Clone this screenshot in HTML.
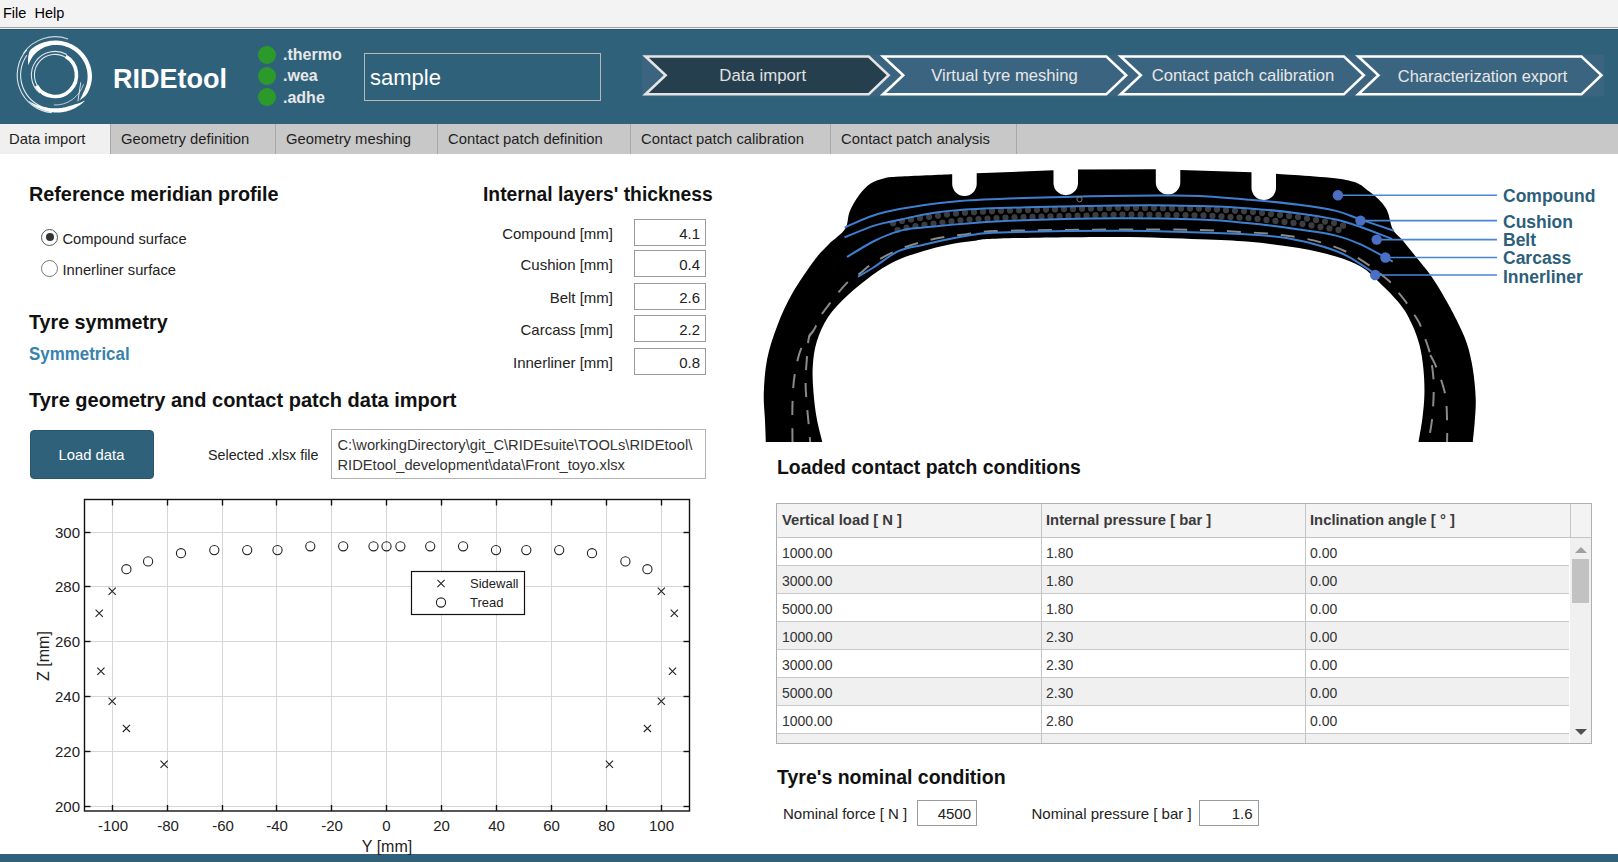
<!DOCTYPE html>
<html><head><meta charset="utf-8"><style>
html,body{margin:0;padding:0;width:1618px;height:862px;overflow:hidden;background:#fff;position:relative;font-family:"Liberation Sans",sans-serif}
.t{position:absolute;white-space:nowrap;font-family:"Liberation Sans", sans-serif}
</style></head><body>
<div style="position:absolute;left:0px;top:0px;width:1618px;height:27px;background:#f3f3f3"></div>
<div style="position:absolute;left:0px;top:27px;width:1618px;height:1px;background:#a0a0a0"></div>
<div style="position:absolute;left:0px;top:28px;width:1618px;height:1px;background:#f0f0f0"></div>
<div class="t" style="left:3.0px;top:5.7px;font-size:14.5px;line-height:14.5px;font-weight:normal;color:#000;">File</div>
<div class="t" style="left:34.5px;top:5.7px;font-size:14.5px;line-height:14.5px;font-weight:normal;color:#000;">Help</div>
<div style="position:absolute;left:0px;top:29px;width:1618px;height:95px;background:#2f617a"></div>
<div style="position:absolute;left:0px;top:29px;width:1618px;height:1px;background:#28546b"></div>
<svg style="position:absolute;left:0;top:0" width="130" height="125"><path d="M28.38,65.28 L28.12,63.14 L28.01,60.94 L28.07,58.67 L28.30,56.36 L28.71,54.01 L29.31,51.64 L30.57,49.76 L32.29,48.35 L34.08,47.04 L35.95,45.84 L37.88,44.76 L39.87,43.79 L41.90,42.95 L43.98,42.24 L46.10,41.65 L48.24,41.19 L50.41,40.85 L52.58,40.65 L54.76,40.58 L56.94,40.62 L59.11,40.77 L61.26,41.04 L63.39,41.44 L65.50,41.97 L67.57,42.62 L69.59,43.39 L71.56,44.28 L73.48,45.29 L75.33,46.40 L77.12,47.62 L78.83,48.94 L80.46,50.37 L81.99,51.88 L83.44,53.49 L84.79,55.17 L86.03,56.94 L87.16,58.77 L88.19,60.67 L89.09,62.63 L89.88,64.63 L90.55,66.68 L91.09,68.77 L91.51,70.88 L91.80,73.01 L91.96,75.16 L91.99,77.31 L91.82,79.45 L91.52,81.58 L91.10,83.67 L90.56,85.74 L89.89,87.76 L89.11,89.73 L88.19,91.64 L87.17,93.49 L85.91,95.19 L84.36,96.66 L82.74,98.01 L81.06,99.23 L79.33,100.33 L79.33,100.33 L80.41,98.66 L81.38,96.93 L82.22,95.18 L82.95,93.39 L83.76,91.68 L84.58,90.00 L85.31,88.27 L85.95,86.51 L86.50,84.71 L86.94,82.88 L87.27,81.03 L87.49,79.16 L87.59,77.27 L87.58,75.38 L87.45,73.50 L87.21,71.62 L86.85,69.76 L86.38,67.93 L85.81,66.12 L85.13,64.35 L84.34,62.62 L83.45,60.94 L82.46,59.32 L81.38,57.76 L80.20,56.26 L78.94,54.84 L77.59,53.49 L76.16,52.23 L74.66,51.05 L73.09,49.96 L71.45,48.97 L69.75,48.09 L68.01,47.31 L66.22,46.63 L64.39,46.07 L62.53,45.61 L60.64,45.27 L58.74,45.03 L56.83,44.92 L54.91,44.93 L53.00,45.07 L51.10,45.32 L49.22,45.69 L47.36,46.16 L45.54,46.75 L43.79,47.51 L42.10,48.39 L40.47,49.36 L38.90,50.43 L37.41,51.59 L36.00,52.83 L34.67,54.15 L33.44,55.56 L32.34,57.07 L31.35,58.63 L30.45,60.23 L29.66,61.88 L28.97,63.57 L28.38,65.28 Z" fill="#fff"/><path d="M84.73,101.10 L83.93,101.85 L83.12,102.58 L82.29,103.27 L81.44,103.94 L80.58,104.59 L79.69,105.20 L78.80,105.79 L77.89,106.35 L76.96,106.88 L76.06,107.43 L75.14,107.95 L74.21,108.45 L73.26,108.91 L72.30,109.35 L71.33,109.76 L70.36,110.14 L69.37,110.49 L68.37,110.81 L67.38,111.11 L66.37,111.39 L65.36,111.64 L64.34,111.85 L63.32,112.04 L62.29,112.20 L61.26,112.32 L60.23,112.42 L59.20,112.48 L58.17,112.52 L57.14,112.53 L56.11,112.50 L55.08,112.49 L54.05,112.45 L53.02,112.37 L52.00,112.27 L50.98,112.14 L49.96,111.98 L48.95,111.79 L47.94,111.57 L46.94,111.33 L45.95,111.05 L44.97,110.74 L44.00,110.41 L43.02,110.09 L42.04,109.75 L41.07,109.38 L40.12,108.99 L39.17,108.56 L38.23,108.11 L37.31,107.63 L36.40,107.12 L35.51,106.59 L34.62,106.03 L33.75,105.45 L32.89,104.84 L32.05,104.21 L31.23,103.55 L30.43,102.86 L29.64,102.16 L28.88,101.42 L29.25,101.09 L30.14,101.68 L31.05,102.24 L31.96,102.76 L32.89,103.26 L33.82,103.72 L34.76,104.15 L35.71,104.55 L36.66,104.92 L37.60,105.28 L38.54,105.61 L39.49,105.91 L40.44,106.19 L41.39,106.43 L42.34,106.64 L43.29,106.82 L44.24,106.97 L45.18,107.11 L46.08,107.34 L46.98,107.56 L47.89,107.74 L48.80,107.90 L49.71,108.03 L50.62,108.13 L51.54,108.21 L52.45,108.26 L53.37,108.28 L54.28,108.28 L55.19,108.25 L56.09,108.20 L57.00,108.22 L57.90,108.21 L58.81,108.18 L59.72,108.11 L60.62,108.03 L61.53,107.91 L62.43,107.77 L63.32,107.61 L64.22,107.41 L65.10,107.19 L65.99,106.95 L66.86,106.69 L67.79,106.52 L68.71,106.33 L69.63,106.11 L70.54,105.86 L71.46,105.58 L72.37,105.28 L73.28,104.94 L74.18,104.58 L75.07,104.19 L76.11,103.96 L77.14,103.70 L78.18,103.40 L79.21,103.06 L80.25,102.68 L81.28,102.26 L82.31,101.81 L83.33,101.32 L84.34,100.78 Z" fill="#fff"/><g fill="none" stroke="#fff"><path d="M65.75,56.38 A21.5,21.5 0 1 1 36.38,85.75" stroke-width="3.6"/><path d="M39.22,88.24 A20.6,20.6 0 0 1 66.82,58.13" stroke-width="1.1" opacity="0.85"/><path d="M39.83,93.08 A23.6,23.6 0 0 1 66.80,54.56" stroke-width="1.1" opacity="0.85"/><path d="M51.71,112.66 A37.8,37.8 0 0 1 26.91,49.71" stroke-width="1.1" opacity="0.85"/><path d="M46.10,108.23 A34.4,34.4 0 0 1 26.82,55.27" stroke-width="1.1" opacity="0.85"/><path d="M23.63,53.03 A38.3,38.3 0 0 1 68.10,39.01" stroke-width="1.1" opacity="0.75"/><path d="M83.53,84.27 A30.0,30.0 0 0 1 53.95,104.98" stroke-width="0.9" opacity="0.75"/><path d="M77.9,101.3 L80.8,82.3" stroke-width="1" opacity="0.8"/></g></svg>
<div class="t" style="left:113.2px;top:64.3px;font-size:28.3px;line-height:28.3px;font-weight:bold;color:#fff;transform:scaleX(0.955);transform-origin:0 0">RIDEtool</div>
<div style="position:absolute;left:257.5px;top:45.7px;width:18.0px;height:18.0px;background:#2b9a2b;border-radius:50%"></div>
<div style="position:absolute;left:257.5px;top:66.8px;width:18.0px;height:18.0px;background:#2b9a2b;border-radius:50%"></div>
<div style="position:absolute;left:257.5px;top:88.4px;width:18.0px;height:18.0px;background:#2b9a2b;border-radius:50%"></div>
<div class="t" style="left:283.0px;top:46.5px;font-size:16px;line-height:16px;font-weight:bold;color:#e8e8e8;">.thermo</div>
<div class="t" style="left:283.0px;top:68.0px;font-size:16px;line-height:16px;font-weight:bold;color:#e8e8e8;">.wea</div>
<div class="t" style="left:283.0px;top:89.5px;font-size:16px;line-height:16px;font-weight:bold;color:#e8e8e8;">.adhe</div>
<div style="position:absolute;left:364px;top:53px;width:237px;height:48px;border:1px solid #b8b8b8;box-sizing:border-box"></div>
<div class="t" style="left:370.0px;top:66.9px;font-size:22px;line-height:22px;font-weight:normal;color:#fff;">sample</div>
<svg style="position:absolute;left:0;top:0" width="1618" height="125"><defs><clipPath id="cc"><rect x="641.8" y="54" width="962.2" height="43"/></clipPath></defs><g clip-path="url(#cc)"><rect x="641.5" y="54.5" width="963" height="42" fill="#3b6480"/><polygon points="642.20,55.20 869.20,55.20 890.50,75.35 869.20,95.50 642.20,95.50 663.70,75.35" fill="#e4e4e4"/><polygon points="648.78,57.80 868.17,57.80 886.72,75.35 868.17,92.90 648.78,92.90 667.50,75.35" fill="#263f4e"/><polygon points="879.80,55.20 1106.80,55.20 1128.10,75.35 1106.80,95.50 879.80,95.50 901.30,75.35" fill="#ffffff"/><polygon points="886.38,57.80 1105.77,57.80 1124.32,75.35 1105.77,92.90 886.38,92.90 905.10,75.35" fill="#3b6480"/><polygon points="1117.40,55.20 1344.40,55.20 1365.70,75.35 1344.40,95.50 1117.40,95.50 1138.90,75.35" fill="#ffffff"/><polygon points="1123.98,57.80 1343.37,57.80 1361.92,75.35 1343.37,92.90 1123.98,92.90 1142.70,75.35" fill="#3b6480"/><polygon points="1355.00,55.20 1582.00,55.20 1603.30,75.35 1582.00,95.50 1355.00,95.50 1376.50,75.35" fill="#ffffff"/><polygon points="1361.58,57.80 1580.97,57.80 1599.52,75.35 1580.97,92.90 1361.58,92.90 1380.30,75.35" fill="#3b6480"/></g></svg>
<div class="t" style="left:362.7px;width:800px;text-align:center;top:67.8px;font-size:16.8px;line-height:16.8px;font-weight:normal;color:#e2e2e2;">Data import</div>
<div class="t" style="left:604.5px;width:800px;text-align:center;top:67.9px;font-size:16.6px;line-height:16.6px;font-weight:normal;color:#e8e8e8;">Virtual tyre meshing</div>
<div class="t" style="left:843.0px;width:800px;text-align:center;top:67.9px;font-size:16.6px;line-height:16.6px;font-weight:normal;color:#e8e8e8;">Contact patch calibration</div>
<div class="t" style="left:1082.6px;width:800px;text-align:center;top:68.1px;font-size:16.4px;line-height:16.4px;font-weight:normal;color:#e8e8e8;">Characterization export</div>
<div style="position:absolute;left:0px;top:124px;width:1618px;height:30px;background:#c8c8c8"></div>
<div style="position:absolute;left:0px;top:124px;width:110px;height:30px;background:#f0f0f0"></div>
<div class="t" style="left:9.0px;top:132.0px;font-size:14.8px;line-height:14.8px;font-weight:normal;color:#1e1e1e;">Data import</div>
<div class="t" style="left:121.0px;top:132.0px;font-size:14.8px;line-height:14.8px;font-weight:normal;color:#1e1e1e;">Geometry definition</div>
<div style="position:absolute;left:110px;top:124px;width:1px;height:30px;background:#a8a8a8"></div>
<div class="t" style="left:286.0px;top:132.0px;font-size:14.8px;line-height:14.8px;font-weight:normal;color:#1e1e1e;">Geometry meshing</div>
<div style="position:absolute;left:275px;top:124px;width:1px;height:30px;background:#a8a8a8"></div>
<div class="t" style="left:448.0px;top:132.0px;font-size:14.8px;line-height:14.8px;font-weight:normal;color:#1e1e1e;">Contact patch definition</div>
<div style="position:absolute;left:437px;top:124px;width:1px;height:30px;background:#a8a8a8"></div>
<div class="t" style="left:641.0px;top:132.0px;font-size:14.8px;line-height:14.8px;font-weight:normal;color:#1e1e1e;">Contact patch calibration</div>
<div style="position:absolute;left:630px;top:124px;width:1px;height:30px;background:#a8a8a8"></div>
<div class="t" style="left:841.0px;top:132.0px;font-size:14.8px;line-height:14.8px;font-weight:normal;color:#1e1e1e;">Contact patch analysis</div>
<div style="position:absolute;left:830px;top:124px;width:1px;height:30px;background:#a8a8a8"></div>
<div style="position:absolute;left:1016px;top:124px;width:1px;height:30px;background:#a8a8a8"></div>
<div style="position:absolute;left:0px;top:154px;width:1618px;height:700px;background:#fff"></div>
<div style="position:absolute;left:0px;top:854px;width:1618px;height:8px;background:#2f617a"></div>
<div class="t" style="left:29.0px;top:185.0px;font-size:19.8px;line-height:19.8px;font-weight:bold;color:#111;">Reference meridian profile</div>
<div style="position:absolute;left:41px;top:228.5px;width:15px;height:15px;border:1px solid #555;border-radius:50%;background:#fff"></div>
<div style="position:absolute;left:45.5px;top:233px;width:8px;height:8px;border-radius:50%;background:#333"></div>
<div style="position:absolute;left:41px;top:259.5px;width:15px;height:15px;border:1px solid #777;border-radius:50%;background:#fff"></div>
<div class="t" style="left:62.5px;top:231.6px;font-size:14.7px;line-height:14.7px;font-weight:normal;color:#222;">Compound surface</div>
<div class="t" style="left:62.5px;top:262.6px;font-size:14.7px;line-height:14.7px;font-weight:normal;color:#222;">Innerliner surface</div>
<div class="t" style="left:29.0px;top:312.6px;font-size:19.7px;line-height:19.7px;font-weight:bold;color:#111;">Tyre symmetry</div>
<div class="t" style="left:28.6px;top:345.4px;font-size:18.2px;line-height:18.2px;font-weight:bold;color:#3882ac;transform:scaleX(0.93);transform-origin:0 0">Symmetrical</div>
<div class="t" style="left:29.0px;top:389.7px;font-size:20px;line-height:20px;font-weight:bold;color:#111;">Tyre geometry and contact patch data import</div>
<div class="t" style="left:483.0px;top:184.7px;font-size:19.3px;line-height:19.3px;font-weight:bold;color:#111;">Internal layers' thickness</div>
<div class="t" style="left:13.0px;width:600px;text-align:right;top:226.0px;font-size:15px;line-height:15px;font-weight:normal;color:#222;">Compound [mm]</div>
<div style="position:absolute;left:634px;top:219px;width:72px;height:27px;border:1px solid #9a9a9a;box-sizing:border-box;background:#fff"></div>
<div class="t" style="left:100.0px;width:600px;text-align:right;top:226.0px;font-size:15px;line-height:15px;font-weight:normal;color:#222;">4.1</div>
<div class="t" style="left:13.0px;width:600px;text-align:right;top:257.0px;font-size:15px;line-height:15px;font-weight:normal;color:#222;">Cushion [mm]</div>
<div style="position:absolute;left:634px;top:250px;width:72px;height:27px;border:1px solid #9a9a9a;box-sizing:border-box;background:#fff"></div>
<div class="t" style="left:100.0px;width:600px;text-align:right;top:257.0px;font-size:15px;line-height:15px;font-weight:normal;color:#222;">0.4</div>
<div class="t" style="left:13.0px;width:600px;text-align:right;top:290.0px;font-size:15px;line-height:15px;font-weight:normal;color:#222;">Belt [mm]</div>
<div style="position:absolute;left:634px;top:283px;width:72px;height:27px;border:1px solid #9a9a9a;box-sizing:border-box;background:#fff"></div>
<div class="t" style="left:100.0px;width:600px;text-align:right;top:290.0px;font-size:15px;line-height:15px;font-weight:normal;color:#222;">2.6</div>
<div class="t" style="left:13.0px;width:600px;text-align:right;top:322.0px;font-size:15px;line-height:15px;font-weight:normal;color:#222;">Carcass [mm]</div>
<div style="position:absolute;left:634px;top:315px;width:72px;height:27px;border:1px solid #9a9a9a;box-sizing:border-box;background:#fff"></div>
<div class="t" style="left:100.0px;width:600px;text-align:right;top:322.0px;font-size:15px;line-height:15px;font-weight:normal;color:#222;">2.2</div>
<div class="t" style="left:13.0px;width:600px;text-align:right;top:355.0px;font-size:15px;line-height:15px;font-weight:normal;color:#222;">Innerliner [mm]</div>
<div style="position:absolute;left:634px;top:348px;width:72px;height:27px;border:1px solid #9a9a9a;box-sizing:border-box;background:#fff"></div>
<div class="t" style="left:100.0px;width:600px;text-align:right;top:355.0px;font-size:15px;line-height:15px;font-weight:normal;color:#222;">0.8</div>
<div style="position:absolute;left:29.5px;top:429.5px;width:124.0px;height:49.0px;background:#2f617a;border:1px solid #2a566d;border-radius:4px;box-sizing:border-box"></div>
<div class="t" style="left:-308.5px;width:800px;text-align:center;top:448.0px;font-size:14.8px;line-height:14.8px;font-weight:normal;color:#fff;">Load data</div>
<div class="t" style="left:208.0px;top:447.9px;font-size:14.3px;line-height:14.3px;font-weight:normal;color:#222;">Selected .xlsx file</div>
<div style="position:absolute;left:331px;top:429px;width:375px;height:49.5px;border:1px solid #b4b4b4;box-sizing:border-box;background:#fff"></div>
<div class="t" style="left:337.5px;top:438.1px;font-size:14.7px;line-height:14.7px;font-weight:normal;color:#333;">C:\workingDirectory\git_C\RIDEsuite\TOOLs\RIDEtool\</div>
<div class="t" style="left:337.5px;top:458.1px;font-size:14.7px;line-height:14.7px;font-weight:normal;color:#333;">RIDEtool_development\data\Front_toyo.xlsx</div>
<svg style="position:absolute;left:0;top:0" width="1618" height="862"><line x1="112.5" y1="499.5" x2="112.5" y2="811" stroke="#d6d6d6" stroke-width="1"/><line x1="167.5" y1="499.5" x2="167.5" y2="811" stroke="#d6d6d6" stroke-width="1"/><line x1="222.5" y1="499.5" x2="222.5" y2="811" stroke="#d6d6d6" stroke-width="1"/><line x1="276.5" y1="499.5" x2="276.5" y2="811" stroke="#d6d6d6" stroke-width="1"/><line x1="331.5" y1="499.5" x2="331.5" y2="811" stroke="#d6d6d6" stroke-width="1"/><line x1="386.5" y1="499.5" x2="386.5" y2="811" stroke="#d6d6d6" stroke-width="1"/><line x1="441.5" y1="499.5" x2="441.5" y2="811" stroke="#d6d6d6" stroke-width="1"/><line x1="496.5" y1="499.5" x2="496.5" y2="811" stroke="#d6d6d6" stroke-width="1"/><line x1="551.5" y1="499.5" x2="551.5" y2="811" stroke="#d6d6d6" stroke-width="1"/><line x1="606.5" y1="499.5" x2="606.5" y2="811" stroke="#d6d6d6" stroke-width="1"/><line x1="661.5" y1="499.5" x2="661.5" y2="811" stroke="#d6d6d6" stroke-width="1"/><line x1="84.5" y1="806.5" x2="689.5" y2="806.5" stroke="#d6d6d6" stroke-width="1"/><line x1="84.5" y1="751.5" x2="689.5" y2="751.5" stroke="#d6d6d6" stroke-width="1"/><line x1="84.5" y1="696.5" x2="689.5" y2="696.5" stroke="#d6d6d6" stroke-width="1"/><line x1="84.5" y1="641.5" x2="689.5" y2="641.5" stroke="#d6d6d6" stroke-width="1"/><line x1="84.5" y1="586.5" x2="689.5" y2="586.5" stroke="#d6d6d6" stroke-width="1"/><line x1="84.5" y1="532.5" x2="689.5" y2="532.5" stroke="#d6d6d6" stroke-width="1"/><rect x="84.5" y="499.5" width="605.0" height="311.5" fill="none" stroke="#111" stroke-width="1.4"/><line x1="112.5" y1="499.5" x2="112.5" y2="505.5" stroke="#111" stroke-width="1.4"/><line x1="112.5" y1="811" x2="112.5" y2="805" stroke="#111" stroke-width="1.4"/><line x1="167.5" y1="499.5" x2="167.5" y2="505.5" stroke="#111" stroke-width="1.4"/><line x1="167.5" y1="811" x2="167.5" y2="805" stroke="#111" stroke-width="1.4"/><line x1="222.5" y1="499.5" x2="222.5" y2="505.5" stroke="#111" stroke-width="1.4"/><line x1="222.5" y1="811" x2="222.5" y2="805" stroke="#111" stroke-width="1.4"/><line x1="276.5" y1="499.5" x2="276.5" y2="505.5" stroke="#111" stroke-width="1.4"/><line x1="276.5" y1="811" x2="276.5" y2="805" stroke="#111" stroke-width="1.4"/><line x1="331.5" y1="499.5" x2="331.5" y2="505.5" stroke="#111" stroke-width="1.4"/><line x1="331.5" y1="811" x2="331.5" y2="805" stroke="#111" stroke-width="1.4"/><line x1="386.5" y1="499.5" x2="386.5" y2="505.5" stroke="#111" stroke-width="1.4"/><line x1="386.5" y1="811" x2="386.5" y2="805" stroke="#111" stroke-width="1.4"/><line x1="441.5" y1="499.5" x2="441.5" y2="505.5" stroke="#111" stroke-width="1.4"/><line x1="441.5" y1="811" x2="441.5" y2="805" stroke="#111" stroke-width="1.4"/><line x1="496.5" y1="499.5" x2="496.5" y2="505.5" stroke="#111" stroke-width="1.4"/><line x1="496.5" y1="811" x2="496.5" y2="805" stroke="#111" stroke-width="1.4"/><line x1="551.5" y1="499.5" x2="551.5" y2="505.5" stroke="#111" stroke-width="1.4"/><line x1="551.5" y1="811" x2="551.5" y2="805" stroke="#111" stroke-width="1.4"/><line x1="606.5" y1="499.5" x2="606.5" y2="505.5" stroke="#111" stroke-width="1.4"/><line x1="606.5" y1="811" x2="606.5" y2="805" stroke="#111" stroke-width="1.4"/><line x1="661.5" y1="499.5" x2="661.5" y2="505.5" stroke="#111" stroke-width="1.4"/><line x1="661.5" y1="811" x2="661.5" y2="805" stroke="#111" stroke-width="1.4"/><line x1="84.5" y1="806.5" x2="90.5" y2="806.5" stroke="#111" stroke-width="1.4"/><line x1="689.5" y1="806.5" x2="683.5" y2="806.5" stroke="#111" stroke-width="1.4"/><line x1="84.5" y1="751.5" x2="90.5" y2="751.5" stroke="#111" stroke-width="1.4"/><line x1="689.5" y1="751.5" x2="683.5" y2="751.5" stroke="#111" stroke-width="1.4"/><line x1="84.5" y1="696.5" x2="90.5" y2="696.5" stroke="#111" stroke-width="1.4"/><line x1="689.5" y1="696.5" x2="683.5" y2="696.5" stroke="#111" stroke-width="1.4"/><line x1="84.5" y1="641.5" x2="90.5" y2="641.5" stroke="#111" stroke-width="1.4"/><line x1="689.5" y1="641.5" x2="683.5" y2="641.5" stroke="#111" stroke-width="1.4"/><line x1="84.5" y1="586.5" x2="90.5" y2="586.5" stroke="#111" stroke-width="1.4"/><line x1="689.5" y1="586.5" x2="683.5" y2="586.5" stroke="#111" stroke-width="1.4"/><line x1="84.5" y1="532.5" x2="90.5" y2="532.5" stroke="#111" stroke-width="1.4"/><line x1="689.5" y1="532.5" x2="683.5" y2="532.5" stroke="#111" stroke-width="1.4"/><circle cx="126.4" cy="569.2" r="4.6" fill="none" stroke="#222" stroke-width="1.1"/><circle cx="148.1" cy="561.4" r="4.6" fill="none" stroke="#222" stroke-width="1.1"/><circle cx="181" cy="553.2" r="4.6" fill="none" stroke="#222" stroke-width="1.1"/><circle cx="214.3" cy="550.1" r="4.6" fill="none" stroke="#222" stroke-width="1.1"/><circle cx="247.2" cy="550.1" r="4.6" fill="none" stroke="#222" stroke-width="1.1"/><circle cx="277.5" cy="550.1" r="4.6" fill="none" stroke="#222" stroke-width="1.1"/><circle cx="310.3" cy="546.3" r="4.6" fill="none" stroke="#222" stroke-width="1.1"/><circle cx="343.2" cy="546.3" r="4.6" fill="none" stroke="#222" stroke-width="1.1"/><circle cx="373.5" cy="546.3" r="4.6" fill="none" stroke="#222" stroke-width="1.1"/><circle cx="386.5" cy="546.3" r="4.6" fill="none" stroke="#222" stroke-width="1.1"/><circle cx="400.4" cy="546.3" r="4.6" fill="none" stroke="#222" stroke-width="1.1"/><circle cx="430.2" cy="546.3" r="4.6" fill="none" stroke="#222" stroke-width="1.1"/><circle cx="463.1" cy="546.3" r="4.6" fill="none" stroke="#222" stroke-width="1.1"/><circle cx="496" cy="550.1" r="4.6" fill="none" stroke="#222" stroke-width="1.1"/><circle cx="526.3" cy="550.1" r="4.6" fill="none" stroke="#222" stroke-width="1.1"/><circle cx="559.2" cy="550.1" r="4.6" fill="none" stroke="#222" stroke-width="1.1"/><circle cx="592" cy="553.2" r="4.6" fill="none" stroke="#222" stroke-width="1.1"/><circle cx="625.4" cy="561.4" r="4.6" fill="none" stroke="#222" stroke-width="1.1"/><circle cx="647.4" cy="569.2" r="4.6" fill="none" stroke="#222" stroke-width="1.1"/><path d="M108.60000000000001,587.6999999999999 L115.8,594.9 M108.60000000000001,594.9 L115.8,587.6999999999999" stroke="#222" stroke-width="1.1"/><path d="M95.60000000000001,609.6999999999999 L102.8,616.9 M95.60000000000001,616.9 L102.8,609.6999999999999" stroke="#222" stroke-width="1.1"/><path d="M97.30000000000001,667.6999999999999 L104.5,674.9 M97.30000000000001,674.9 L104.5,667.6999999999999" stroke="#222" stroke-width="1.1"/><path d="M108.60000000000001,697.6 L115.8,704.8000000000001 M108.60000000000001,704.8000000000001 L115.8,697.6" stroke="#222" stroke-width="1.1"/><path d="M122.80000000000001,724.8 L130.0,732.0 M122.80000000000001,732.0 L130.0,724.8" stroke="#222" stroke-width="1.1"/><path d="M160.5,760.6999999999999 L167.7,767.9 M160.5,767.9 L167.7,760.6999999999999" stroke="#222" stroke-width="1.1"/><path d="M657.6999999999999,587.6999999999999 L664.9,594.9 M657.6999999999999,594.9 L664.9,587.6999999999999" stroke="#222" stroke-width="1.1"/><path d="M670.6999999999999,609.6999999999999 L677.9,616.9 M670.6999999999999,616.9 L677.9,609.6999999999999" stroke="#222" stroke-width="1.1"/><path d="M668.9,667.6999999999999 L676.1,674.9 M668.9,674.9 L676.1,667.6999999999999" stroke="#222" stroke-width="1.1"/><path d="M657.6999999999999,697.6 L664.9,704.8000000000001 M657.6999999999999,704.8000000000001 L664.9,697.6" stroke="#222" stroke-width="1.1"/><path d="M643.8,724.8 L651.0,732.0 M643.8,732.0 L651.0,724.8" stroke="#222" stroke-width="1.1"/><path d="M605.8,760.6999999999999 L613.0,767.9 M605.8,767.9 L613.0,760.6999999999999" stroke="#222" stroke-width="1.1"/><rect x="411.5" y="571.5" width="113" height="43" fill="#fff" stroke="#111" stroke-width="1.2"/><path d="M437.4,579.9 L444.6,587.1 M437.4,587.1 L444.6,579.9" stroke="#222" stroke-width="1.1"/><circle cx="441" cy="602.5" r="4.6" fill="none" stroke="#222" stroke-width="1.1"/></svg>
<div class="t" style="left:470.0px;top:576.5px;font-size:13px;line-height:13px;font-weight:normal;color:#222;">Sidewall</div>
<div class="t" style="left:470.0px;top:596.2px;font-size:13px;line-height:13px;font-weight:normal;color:#222;">Tread</div>
<div class="t" style="left:-287.0px;width:800px;text-align:center;top:818.3px;font-size:15px;line-height:15px;font-weight:normal;color:#222;">-100</div>
<div class="t" style="left:-232.0px;width:800px;text-align:center;top:818.3px;font-size:15px;line-height:15px;font-weight:normal;color:#222;">-80</div>
<div class="t" style="left:-177.0px;width:800px;text-align:center;top:818.3px;font-size:15px;line-height:15px;font-weight:normal;color:#222;">-60</div>
<div class="t" style="left:-123.0px;width:800px;text-align:center;top:818.3px;font-size:15px;line-height:15px;font-weight:normal;color:#222;">-40</div>
<div class="t" style="left:-68.0px;width:800px;text-align:center;top:818.3px;font-size:15px;line-height:15px;font-weight:normal;color:#222;">-20</div>
<div class="t" style="left:-13.5px;width:800px;text-align:center;top:818.3px;font-size:15px;line-height:15px;font-weight:normal;color:#222;">0</div>
<div class="t" style="left:41.5px;width:800px;text-align:center;top:818.3px;font-size:15px;line-height:15px;font-weight:normal;color:#222;">20</div>
<div class="t" style="left:96.5px;width:800px;text-align:center;top:818.3px;font-size:15px;line-height:15px;font-weight:normal;color:#222;">40</div>
<div class="t" style="left:151.5px;width:800px;text-align:center;top:818.3px;font-size:15px;line-height:15px;font-weight:normal;color:#222;">60</div>
<div class="t" style="left:206.5px;width:800px;text-align:center;top:818.3px;font-size:15px;line-height:15px;font-weight:normal;color:#222;">80</div>
<div class="t" style="left:261.5px;width:800px;text-align:center;top:818.3px;font-size:15px;line-height:15px;font-weight:normal;color:#222;">100</div>
<div class="t" style="left:-520.0px;width:600px;text-align:right;top:799.4px;font-size:15px;line-height:15px;font-weight:normal;color:#222;">200</div>
<div class="t" style="left:-520.0px;width:600px;text-align:right;top:744.4px;font-size:15px;line-height:15px;font-weight:normal;color:#222;">220</div>
<div class="t" style="left:-520.0px;width:600px;text-align:right;top:689.4px;font-size:15px;line-height:15px;font-weight:normal;color:#222;">240</div>
<div class="t" style="left:-520.0px;width:600px;text-align:right;top:634.4px;font-size:15px;line-height:15px;font-weight:normal;color:#222;">260</div>
<div class="t" style="left:-520.0px;width:600px;text-align:right;top:579.4px;font-size:15px;line-height:15px;font-weight:normal;color:#222;">280</div>
<div class="t" style="left:-520.0px;width:600px;text-align:right;top:525.4px;font-size:15px;line-height:15px;font-weight:normal;color:#222;">300</div>
<div class="t" style="left:-13.0px;width:800px;text-align:center;top:838.5px;font-size:16px;line-height:16px;font-weight:normal;color:#222;">Y [mm]</div>
<div class="t" style="left:13.5px;top:648px;width:60px;text-align:center;font-size:16px;line-height:16px;color:#222;transform:rotate(-90deg)">Z [mm]</div>
<div class="t" style="left:777.0px;top:457.9px;font-size:19.4px;line-height:19.4px;font-weight:bold;color:#111;">Loaded contact patch conditions</div>
<div style="position:absolute;left:776px;top:503px;width:816px;height:241px;border:1px solid #b0b0b0;box-sizing:border-box;background:#fff"></div>
<div style="position:absolute;left:777px;top:504px;width:814px;height:33px;background:#f3f3f3"></div>
<div style="position:absolute;left:777px;top:537px;width:814px;height:1px;background:#c4c4c4"></div>
<div style="position:absolute;left:777px;top:565px;width:792px;height:1px;background:#c8c8c8"></div>
<div style="position:absolute;left:777px;top:566px;width:792px;height:27px;background:#f0f0f0"></div>
<div style="position:absolute;left:777px;top:593px;width:792px;height:1px;background:#c8c8c8"></div>
<div style="position:absolute;left:777px;top:621px;width:792px;height:1px;background:#c8c8c8"></div>
<div style="position:absolute;left:777px;top:622px;width:792px;height:27px;background:#f0f0f0"></div>
<div style="position:absolute;left:777px;top:649px;width:792px;height:1px;background:#c8c8c8"></div>
<div style="position:absolute;left:777px;top:677px;width:792px;height:1px;background:#c8c8c8"></div>
<div style="position:absolute;left:777px;top:678px;width:792px;height:27px;background:#f0f0f0"></div>
<div style="position:absolute;left:777px;top:705px;width:792px;height:1px;background:#c8c8c8"></div>
<div style="position:absolute;left:777px;top:733px;width:792px;height:1px;background:#c8c8c8"></div>
<div style="position:absolute;left:777px;top:734px;width:792px;height:9px;background:#f0f0f0"></div>
<div style="position:absolute;left:1041px;top:504px;width:1px;height:239px;background:#c4c4c4"></div>
<div style="position:absolute;left:1305px;top:504px;width:1px;height:239px;background:#c4c4c4"></div>
<div style="position:absolute;left:1569.5px;top:504px;width:1.0px;height:33px;background:#c4c4c4"></div>
<div class="t" style="left:782.0px;top:512.5px;font-size:14.8px;line-height:14.8px;font-weight:bold;color:#3a3a3a;">Vertical load [ N ]</div>
<div class="t" style="left:1046.0px;top:512.5px;font-size:14.8px;line-height:14.8px;font-weight:bold;color:#3a3a3a;">Internal pressure [ bar ]</div>
<div class="t" style="left:1310.0px;top:512.5px;font-size:14.8px;line-height:14.8px;font-weight:bold;color:#3a3a3a;">Inclination angle [ ° ]</div>
<div class="t" style="left:782.0px;top:545.6px;font-size:14px;line-height:14px;font-weight:normal;color:#333;">1000.00</div>
<div class="t" style="left:1046.0px;top:545.6px;font-size:14px;line-height:14px;font-weight:normal;color:#333;">1.80</div>
<div class="t" style="left:1310.0px;top:545.6px;font-size:14px;line-height:14px;font-weight:normal;color:#333;">0.00</div>
<div class="t" style="left:782.0px;top:573.6px;font-size:14px;line-height:14px;font-weight:normal;color:#333;">3000.00</div>
<div class="t" style="left:1046.0px;top:573.6px;font-size:14px;line-height:14px;font-weight:normal;color:#333;">1.80</div>
<div class="t" style="left:1310.0px;top:573.6px;font-size:14px;line-height:14px;font-weight:normal;color:#333;">0.00</div>
<div class="t" style="left:782.0px;top:601.6px;font-size:14px;line-height:14px;font-weight:normal;color:#333;">5000.00</div>
<div class="t" style="left:1046.0px;top:601.6px;font-size:14px;line-height:14px;font-weight:normal;color:#333;">1.80</div>
<div class="t" style="left:1310.0px;top:601.6px;font-size:14px;line-height:14px;font-weight:normal;color:#333;">0.00</div>
<div class="t" style="left:782.0px;top:629.6px;font-size:14px;line-height:14px;font-weight:normal;color:#333;">1000.00</div>
<div class="t" style="left:1046.0px;top:629.6px;font-size:14px;line-height:14px;font-weight:normal;color:#333;">2.30</div>
<div class="t" style="left:1310.0px;top:629.6px;font-size:14px;line-height:14px;font-weight:normal;color:#333;">0.00</div>
<div class="t" style="left:782.0px;top:657.6px;font-size:14px;line-height:14px;font-weight:normal;color:#333;">3000.00</div>
<div class="t" style="left:1046.0px;top:657.6px;font-size:14px;line-height:14px;font-weight:normal;color:#333;">2.30</div>
<div class="t" style="left:1310.0px;top:657.6px;font-size:14px;line-height:14px;font-weight:normal;color:#333;">0.00</div>
<div class="t" style="left:782.0px;top:685.6px;font-size:14px;line-height:14px;font-weight:normal;color:#333;">5000.00</div>
<div class="t" style="left:1046.0px;top:685.6px;font-size:14px;line-height:14px;font-weight:normal;color:#333;">2.30</div>
<div class="t" style="left:1310.0px;top:685.6px;font-size:14px;line-height:14px;font-weight:normal;color:#333;">0.00</div>
<div class="t" style="left:782.0px;top:713.6px;font-size:14px;line-height:14px;font-weight:normal;color:#333;">1000.00</div>
<div class="t" style="left:1046.0px;top:713.6px;font-size:14px;line-height:14px;font-weight:normal;color:#333;">2.80</div>
<div class="t" style="left:1310.0px;top:713.6px;font-size:14px;line-height:14px;font-weight:normal;color:#333;">0.00</div>
<div style="position:absolute;left:1570px;top:538px;width:21px;height:205px;background:#f0f0f0"></div>
<div style="position:absolute;left:1572px;top:558.5px;width:17px;height:44.5px;background:#c2c2c2"></div>
<svg style="position:absolute;left:1574px;top:545px" width="14" height="10"><path d="M1,8 L7,2 L13,8 Z" fill="#a0a0a0"/></svg>
<svg style="position:absolute;left:1574px;top:727px" width="14" height="10"><path d="M1,2 L7,8 L13,2 Z" fill="#505050"/></svg>
<div class="t" style="left:777.0px;top:767.5px;font-size:19.5px;line-height:19.5px;font-weight:bold;color:#111;">Tyre's nominal condition</div>
<div class="t" style="left:783.0px;top:806.3px;font-size:15px;line-height:15px;font-weight:normal;color:#222;">Nominal force [ N ]</div>
<div style="position:absolute;left:917px;top:799.5px;width:60px;height:26.0px;border:1px solid #9a9a9a;box-sizing:border-box;background:#fff"></div>
<div class="t" style="left:371.0px;width:600px;text-align:right;top:806.3px;font-size:15px;line-height:15px;font-weight:normal;color:#222;">4500</div>
<div class="t" style="left:1031.5px;top:806.3px;font-size:15px;line-height:15px;font-weight:normal;color:#222;">Nominal pressure [ bar ]</div>
<div style="position:absolute;left:1199px;top:799.5px;width:60px;height:26.0px;border:1px solid #9a9a9a;box-sizing:border-box;background:#fff"></div>
<div class="t" style="left:652.5px;width:600px;text-align:right;top:806.3px;font-size:15px;line-height:15px;font-weight:normal;color:#222;">1.6</div>
<svg style="position:absolute;left:0;top:0" width="1618" height="862"><path d="M765.8,442 C765.8,438.1 765.3,427.1 764.9,418.8 C764.5,410.5 763.4,402.3 763.8,392.4 C764.2,382.5 764.9,370.3 767.1,359.3 C769.3,348.3 772.9,337.2 777.1,326.2 C781.3,315.2 786.2,304.1 792.5,293.1 C798.8,282.1 808.5,268.2 814.6,260.0 C820.7,251.8 823.9,249.2 829.0,244.0 C834.1,238.8 841.5,234.4 845.0,229.0 C848.5,223.6 847.4,217.0 849.7,211.4 C852.0,205.8 855.5,199.8 859.0,195.2 C862.5,190.5 866.4,186.3 870.6,183.5 C874.9,180.7 879.7,179.5 884.5,178.3 C889.3,177.2 888.3,177.3 899.6,176.6 C910.9,175.9 943.4,174.6 952.2,174.2 L952.2,174.2 L952.2,183.75 A12.25,12.25 0 0 0 976.7,183.75 L976.7,173.3 L1053.5,170.3 L1053.5,170.3 L1053.5,182.95 A12.25,12.25 0 0 0 1078,182.95 L1078,169.5 L1155.8,169.3 L1155.8,169.3 L1155.8,182.25 A12.25,12.25 0 0 0 1180.3,182.25 L1180.3,170 L1251.5,172.2 L1251.5,172.2 L1251.5,187.75 A12.25,12.25 0 0 0 1276,187.75 L1276,173.8 C1287.7,174.8 1330.5,177.0 1346.1,179.9 C1361.6,182.8 1362.7,186.8 1369.3,191.5 C1375.9,196.2 1381.9,201.7 1385.8,208.0 C1389.7,214.3 1389.9,223.8 1392.8,229.3 C1395.7,234.8 1399.2,236.1 1403.2,240.9 C1407.2,245.7 1412.5,252.5 1417.1,258.3 C1421.7,264.1 1426.8,269.7 1431.0,275.7 C1435.2,281.7 1438.3,286.8 1442.6,294.2 C1446.9,301.6 1452.6,311.8 1456.6,320.0 C1460.6,328.2 1464.1,335.1 1466.8,343.2 C1469.5,351.3 1471.3,359.6 1472.8,368.8 C1474.3,378.0 1475.4,389.5 1475.7,398.4 C1476.0,407.3 1475.2,414.8 1474.7,422.1 C1474.2,429.4 1473.1,438.7 1472.8,442.0 L1418.5,442 C1419.2,438.0 1421.4,426.1 1422.4,418.2 C1423.4,410.3 1424.2,402.7 1424.4,394.5 C1424.6,386.3 1424.2,377.0 1423.4,368.8 C1422.6,360.6 1421.5,352.7 1419.5,345.1 C1417.5,337.5 1414.9,330.3 1411.6,323.4 C1408.3,316.5 1405.6,311.0 1399.7,303.7 C1393.8,296.4 1382.5,285.5 1376.0,279.3 C1369.5,273.1 1367.4,270.3 1360.7,266.5 C1354.0,262.7 1346.3,259.7 1336.0,256.6 C1325.7,253.5 1313.3,250.5 1298.9,248.0 C1284.5,245.5 1265.9,243.2 1249.4,241.8 C1232.9,240.4 1221.9,240.1 1200.0,239.3 C1178.1,238.5 1151.3,237.1 1118.0,237.0 C1084.7,236.9 1024.2,237.8 1000.0,238.5 C975.8,239.2 981.6,240.0 973.0,241.0 C964.4,242.0 956.5,243.0 948.3,244.7 C940.1,246.3 931.8,248.4 923.6,250.9 C915.4,253.4 907.0,255.9 898.9,259.6 C890.8,263.3 883.5,267.2 875.0,273.2 C866.5,279.1 855.6,287.9 847.7,295.3 C839.8,302.7 832.9,309.7 827.8,317.4 C822.6,325.1 819.3,333.5 816.8,341.6 C814.3,349.7 813.3,357.4 812.8,365.9 C812.2,374.4 812.8,383.6 813.5,392.4 C814.2,401.2 815.3,410.5 816.8,418.8 C818.3,427.1 821.4,438.1 822.3,442.0 Z" fill="#000"/><g fill="#3b3d40"><circle cx="893.0" cy="223.2" r="3.1"/><circle cx="897.5" cy="230.0" r="3.1"/><circle cx="902.0" cy="220.9" r="3.1"/><circle cx="906.5" cy="227.7" r="3.1"/><circle cx="911.0" cy="219.4" r="3.1"/><circle cx="915.5" cy="226.2" r="3.1"/><circle cx="920.0" cy="218.0" r="3.1"/><circle cx="924.5" cy="224.8" r="3.1"/><circle cx="929.0" cy="216.8" r="3.1"/><circle cx="933.5" cy="223.6" r="3.1"/><circle cx="938.0" cy="215.7" r="3.1"/><circle cx="942.5" cy="222.5" r="3.1"/><circle cx="947.0" cy="214.6" r="3.1"/><circle cx="951.5" cy="221.4" r="3.1"/><circle cx="956.0" cy="213.5" r="3.1"/><circle cx="960.5" cy="220.3" r="3.1"/><circle cx="965.0" cy="212.7" r="3.1"/><circle cx="969.5" cy="219.5" r="3.1"/><circle cx="974.0" cy="212.2" r="3.1"/><circle cx="978.5" cy="219.0" r="3.1"/><circle cx="983.0" cy="211.7" r="3.1"/><circle cx="987.5" cy="218.5" r="3.1"/><circle cx="992.0" cy="211.2" r="3.1"/><circle cx="996.5" cy="218.0" r="3.1"/><circle cx="1001.0" cy="210.8" r="3.1"/><circle cx="1005.5" cy="217.6" r="3.1"/><circle cx="1010.0" cy="210.5" r="3.1"/><circle cx="1014.5" cy="217.3" r="3.1"/><circle cx="1019.0" cy="210.3" r="3.1"/><circle cx="1023.5" cy="217.1" r="3.1"/><circle cx="1028.0" cy="210.1" r="3.1"/><circle cx="1032.5" cy="216.9" r="3.1"/><circle cx="1037.0" cy="209.8" r="3.1"/><circle cx="1041.5" cy="216.6" r="3.1"/><circle cx="1046.0" cy="209.6" r="3.1"/><circle cx="1050.5" cy="216.4" r="3.1"/><circle cx="1055.0" cy="209.4" r="3.1"/><circle cx="1059.5" cy="216.2" r="3.1"/><circle cx="1064.0" cy="209.1" r="3.1"/><circle cx="1068.5" cy="215.9" r="3.1"/><circle cx="1073.0" cy="208.9" r="3.1"/><circle cx="1077.5" cy="215.7" r="3.1"/><circle cx="1082.0" cy="208.7" r="3.1"/><circle cx="1086.5" cy="215.5" r="3.1"/><circle cx="1091.0" cy="208.4" r="3.1"/><circle cx="1095.5" cy="215.2" r="3.1"/><circle cx="1100.0" cy="208.2" r="3.1"/><circle cx="1104.5" cy="215.0" r="3.1"/><circle cx="1109.0" cy="208.0" r="3.1"/><circle cx="1113.5" cy="214.8" r="3.1"/><circle cx="1118.0" cy="207.7" r="3.1"/><circle cx="1122.5" cy="214.5" r="3.1"/><circle cx="1127.0" cy="207.8" r="3.1"/><circle cx="1131.5" cy="214.6" r="3.1"/><circle cx="1136.0" cy="207.9" r="3.1"/><circle cx="1140.5" cy="214.7" r="3.1"/><circle cx="1145.0" cy="208.0" r="3.1"/><circle cx="1149.5" cy="214.8" r="3.1"/><circle cx="1154.0" cy="208.1" r="3.1"/><circle cx="1158.5" cy="214.9" r="3.1"/><circle cx="1163.0" cy="208.2" r="3.1"/><circle cx="1167.5" cy="215.0" r="3.1"/><circle cx="1172.0" cy="208.3" r="3.1"/><circle cx="1176.5" cy="215.1" r="3.1"/><circle cx="1181.0" cy="208.4" r="3.1"/><circle cx="1185.5" cy="215.2" r="3.1"/><circle cx="1190.0" cy="208.5" r="3.1"/><circle cx="1194.5" cy="215.3" r="3.1"/><circle cx="1199.0" cy="208.6" r="3.1"/><circle cx="1203.5" cy="215.4" r="3.1"/><circle cx="1208.0" cy="209.1" r="3.1"/><circle cx="1212.5" cy="215.9" r="3.1"/><circle cx="1217.0" cy="209.6" r="3.1"/><circle cx="1221.5" cy="216.4" r="3.1"/><circle cx="1226.0" cy="210.2" r="3.1"/><circle cx="1230.5" cy="217.0" r="3.1"/><circle cx="1235.0" cy="210.8" r="3.1"/><circle cx="1239.5" cy="217.6" r="3.1"/><circle cx="1244.0" cy="211.3" r="3.1"/><circle cx="1248.5" cy="218.1" r="3.1"/><circle cx="1253.0" cy="212.1" r="3.1"/><circle cx="1257.5" cy="218.9" r="3.1"/><circle cx="1262.0" cy="213.1" r="3.1"/><circle cx="1266.5" cy="219.9" r="3.1"/><circle cx="1271.0" cy="214.1" r="3.1"/><circle cx="1275.5" cy="220.9" r="3.1"/><circle cx="1280.0" cy="215.1" r="3.1"/><circle cx="1284.5" cy="221.9" r="3.1"/><circle cx="1289.0" cy="216.1" r="3.1"/><circle cx="1293.5" cy="222.9" r="3.1"/><circle cx="1298.0" cy="217.1" r="3.1"/><circle cx="1302.5" cy="223.9" r="3.1"/><circle cx="1307.0" cy="218.6" r="3.1"/><circle cx="1311.5" cy="225.4" r="3.1"/><circle cx="1316.0" cy="220.1" r="3.1"/><circle cx="1320.5" cy="226.9" r="3.1"/><circle cx="1325.0" cy="221.6" r="3.1"/><circle cx="1329.5" cy="228.4" r="3.1"/><circle cx="1334.0" cy="223.1" r="3.1"/><circle cx="1338.5" cy="229.9" r="3.1"/><circle cx="1343.0" cy="225.7" r="3.1"/></g><path d="M792.5,442.0 C792.5,435.6 792.1,414.6 792.5,403.4 C792.9,392.2 793.2,383.9 794.7,374.7 C796.2,365.5 798.2,355.5 801.3,348.2 C804.4,340.9 810.2,336.1 813.5,330.6 C816.8,325.1 817.7,320.7 821.2,315.2 C824.7,309.7 830.0,303.0 834.4,297.5 C838.8,292.0 843.7,286.0 847.7,282.1 C851.8,278.2 853.9,277.9 858.7,274.3 C863.5,270.8 868.9,265.3 876.6,260.8 C884.3,256.3 895.1,250.9 905.0,247.2 C914.9,243.5 925.7,240.7 936.0,238.5 C946.3,236.3 956.2,235.4 966.9,234.2 C977.6,232.9 974.8,231.8 1000.0,231.0 C1025.2,230.2 1084.7,229.7 1118.0,229.5 C1151.3,229.3 1179.5,229.6 1200.0,230.0 C1220.5,230.4 1227.2,231.1 1240.8,231.9 C1254.4,232.7 1268.2,233.2 1281.6,235.0 C1295.0,236.8 1308.8,238.8 1321.1,242.4 C1333.4,246.0 1344.6,250.3 1355.7,256.6 C1366.8,262.9 1380.9,274.1 1387.9,280.0 C1394.9,285.9 1394.8,288.2 1397.8,291.8 C1400.8,295.4 1403.1,298.1 1405.7,301.7 C1408.3,305.3 1411.3,310.0 1413.6,313.6 C1415.9,317.2 1417.5,319.1 1419.5,323.4 C1421.5,327.7 1423.6,333.9 1425.4,339.2 C1427.2,344.5 1429.0,348.8 1430.3,355.0 C1431.6,361.2 1432.7,370.4 1433.3,376.7 C1433.9,382.9 1433.8,386.9 1433.7,392.5 C1433.6,398.1 1433.2,405.4 1432.9,410.3 C1432.6,415.2 1432.5,416.8 1431.7,422.1 C1431.0,427.4 1429.0,438.7 1428.4,442.0" fill="none" stroke="#8a8a8a" stroke-width="2" stroke-dasharray="14 13"/><path d="M813.5,331.0 C812.8,332.0 810.1,332.5 809.0,337.2 C807.9,341.9 807.3,350.8 806.8,359.3 C806.2,367.8 805.3,376.6 805.7,388.0 C806.1,399.4 808.2,418.7 809.0,427.7 C809.8,436.7 810.0,439.6 810.2,442.0" fill="none" stroke="#8a8a8a" stroke-width="2" stroke-dasharray="14 13"/><path d="M1430.3,355.0 C1431.3,357.0 1434.0,361.5 1436.2,366.8 C1438.4,372.1 1441.6,381.0 1443.2,386.6 C1444.8,392.2 1445.4,394.5 1446.1,400.4 C1446.8,406.3 1446.9,415.2 1447.1,422.1 C1447.3,429.0 1447.1,438.7 1447.1,442.0" fill="none" stroke="#8a8a8a" stroke-width="2" stroke-dasharray="14 13"/><path d="M844.6,227.6 C851.4,225.0 866.1,216.4 885.3,212.0 C904.5,207.6 928.6,203.5 960.0,200.9 C991.4,198.3 1039.8,197.6 1073.5,196.7 C1107.2,195.8 1141.4,195.7 1162.5,195.6 C1183.6,195.5 1185.5,195.4 1200.0,196.1 C1214.5,196.8 1232.9,198.4 1249.4,199.8 C1265.9,201.2 1284.5,202.8 1298.9,204.7 C1313.3,206.5 1325.7,208.4 1336.0,210.9 C1346.3,213.4 1351.0,216.3 1360.7,219.6 C1370.4,222.9 1388.5,228.8 1394.0,230.7" fill="none" stroke="#3f7fd0" stroke-width="2"/><path d="M844.5,237.3 C849.5,235.4 865.1,228.5 874.2,225.6 C883.3,222.7 884.6,222.6 898.9,220.0 C913.2,217.4 923.5,212.3 960.0,209.9 C996.5,207.5 1078.0,206.2 1118.0,205.6 C1158.0,204.9 1178.1,205.5 1200.0,206.0 C1221.9,206.5 1232.9,207.2 1249.4,208.4 C1265.9,209.6 1284.5,211.5 1298.9,213.4 C1313.3,215.3 1325.7,217.3 1336.0,219.6 C1346.3,221.9 1351.4,223.8 1360.7,227.0 C1370.0,230.2 1386.8,237.0 1392.0,239.0" fill="none" stroke="#3f7fd0" stroke-width="2"/><path d="M847.0,257.0 C851.5,254.3 865.6,245.3 874.2,241.0 C882.9,236.7 890.7,233.4 898.9,231.1 C907.1,228.8 906.8,229.1 923.6,227.4 C940.5,225.8 967.6,222.7 1000.0,221.2 C1032.4,219.7 1084.7,218.6 1118.0,218.3 C1151.3,218.0 1178.1,218.8 1200.0,219.6 C1221.9,220.4 1232.9,221.7 1249.4,223.3 C1265.9,224.9 1284.5,227.4 1298.9,229.4 C1313.3,231.4 1325.7,233.1 1336.0,235.6 C1346.3,238.1 1351.2,240.0 1360.7,244.3 C1370.2,248.6 1387.5,258.7 1392.8,261.6" fill="none" stroke="#3f7fd0" stroke-width="2"/><path d="M858.0,276.7 C860.7,275.1 867.4,271.3 874.2,267.0 C881.0,262.7 890.7,254.6 898.9,250.9 C907.1,247.2 915.4,246.6 923.6,244.7 C931.8,242.8 940.1,240.8 948.3,239.2 C956.5,237.5 964.4,235.9 973.0,234.8 C981.6,233.7 975.8,233.1 1000.0,232.4 C1024.2,231.7 1084.7,230.8 1118.0,230.8 C1151.3,230.8 1178.1,231.9 1200.0,232.5 C1221.9,233.1 1235.0,233.5 1249.4,234.4 C1263.8,235.3 1274.1,236.0 1286.5,238.1 C1298.9,240.2 1313.3,243.7 1323.6,246.8 C1333.9,249.9 1339.6,252.0 1348.3,256.6 C1357.0,261.2 1371.4,271.4 1376.0,274.4" fill="none" stroke="#3f7fd0" stroke-width="2"/><line x1="1337.9" y1="195.2" x2="1497" y2="195.2" stroke="#4a86d8" stroke-width="1.6"/><circle cx="1337.9" cy="195.2" r="5.2" fill="#4a6fc4"/><line x1="1360.5" y1="220.6" x2="1497" y2="220.6" stroke="#4a86d8" stroke-width="1.6"/><circle cx="1360.5" cy="220.6" r="5.2" fill="#4a6fc4"/><line x1="1376.7" y1="239.6" x2="1497" y2="239.6" stroke="#4a86d8" stroke-width="1.6"/><circle cx="1376.7" cy="239.6" r="5.2" fill="#4a6fc4"/><line x1="1385.4" y1="257.5" x2="1497" y2="257.5" stroke="#4a86d8" stroke-width="1.6"/><circle cx="1385.4" cy="257.5" r="5.2" fill="#4a6fc4"/><line x1="1375.2" y1="275" x2="1497" y2="275" stroke="#4a86d8" stroke-width="1.6"/><circle cx="1375.2" cy="275" r="5.2" fill="#4a6fc4"/><circle cx="1079.5" cy="199.2" r="2.6" fill="none" stroke="#888" stroke-width="0.9"/></svg>
<div class="t" style="left:1503.0px;top:187.9px;font-size:17.5px;line-height:17.5px;font-weight:bold;color:#2d5f7a;">Compound</div>
<div class="t" style="left:1503.0px;top:213.7px;font-size:17.5px;line-height:17.5px;font-weight:bold;color:#2d5f7a;">Cushion</div>
<div class="t" style="left:1503.0px;top:231.8px;font-size:17.5px;line-height:17.5px;font-weight:bold;color:#2d5f7a;">Belt</div>
<div class="t" style="left:1503.0px;top:249.7px;font-size:17.5px;line-height:17.5px;font-weight:bold;color:#2d5f7a;">Carcass</div>
<div class="t" style="left:1503.0px;top:268.5px;font-size:17.5px;line-height:17.5px;font-weight:bold;color:#2d5f7a;">Innerliner</div>
</body></html>
